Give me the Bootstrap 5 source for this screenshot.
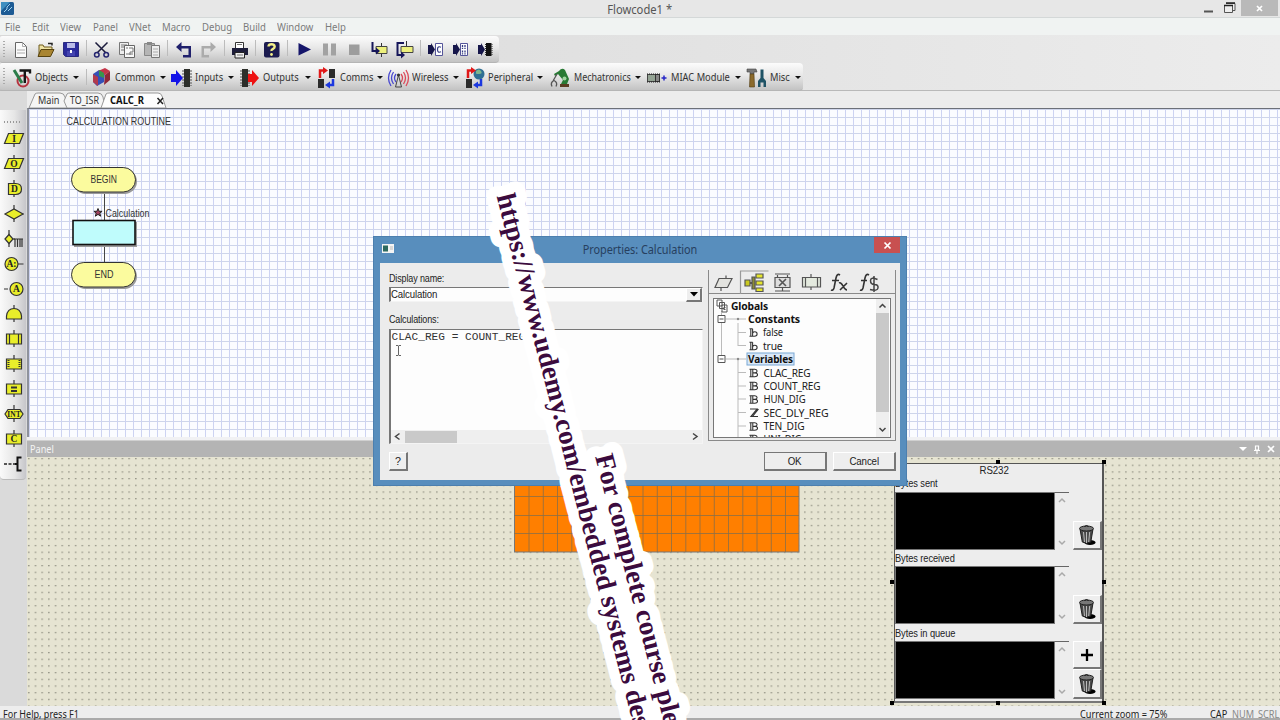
<!DOCTYPE html>
<html lang="en">
<head>
<meta charset="utf-8">
<title>Flowcode1</title>
<link href="https://cdn.jsdelivr.net/npm/bootstrap@5.3.0/dist/css/bootstrap.min.css" rel="stylesheet">
<script src="https://cdn.jsdelivr.net/npm/bootstrap@5.3.0/dist/js/bootstrap.bundle.min.js"></script>
<style>
body{width:1280px;height:720px;overflow:hidden;font:11px/13px "Noto Sans","Open Sans",sans-serif;color:#222;background:#e6e6e6}
svg{display:block;flex:none;overflow:visible}
.nar{display:inline-block;white-space:nowrap;transform:scaleX(.87);transform-origin:0 50%}
.narc{display:inline-block;white-space:nowrap;transform:scaleX(.91)}
.titlebar{height:18px;background:#e7e7e7;border-bottom:1px solid #d4d8d8}
.apptitle{font-size:12.3px;color:#555;padding-top:3px}
.closebox{width:37px;height:16px;background:#b9b9b9;color:#fff}
.menubar{height:17px;background:#f0f3f2;color:#7b7b7b;font-size:11px;padding-left:5px}
.bars{height:56px;background:linear-gradient(90deg,#d9d9d9,#e0e0e0 40%,#ececec);border-bottom:1px solid #b9b9b9;padding-top:1px}
.tool{background:linear-gradient(#fcfcfc,#e8e8e8 45%,#c3c3c3);border-radius:2px 4px 4px 2px;border-bottom:1px solid #b5b5b5}
.tool1{width:499px;height:27px;padding-left:7.5px}
.tool2{width:803px;height:28px;padding-left:10px}
.btnc{width:25px;height:25px}
.vsep{width:6.5px;height:18px}
.vsep::before{content:"";display:block;width:1px;height:16px;background:#bcbcbc;margin-left:3px}
.grp{width:calc(var(--w)*1px);height:26px;padding:2px 4px 0 0;font-size:10.7px;color:#333;white-space:nowrap}
.grp span{display:inline-block;transform:scaleX(.87);transform-origin:0 50%;margin-right:-9px}
.tri{width:0;height:0;border:3px solid transparent;border-top:3px solid #111;border-bottom:0}
.grip{width:2px;height:17px;background:repeating-linear-gradient(#aaa 0 1px,transparent 1px 3px);position:absolute;left:3px;top:5px}
.railwrap{width:27px;background:#dadada}
.rail{width:26px;height:370px;margin-top:19px;background:linear-gradient(90deg,#fafafa,#e6e6e6 55%,#c6c6ca);border-radius:0 0 4px 4px;border-bottom:1px solid #bbb}
.rail .gripx{height:16px;padding:11px 0 0 4px}
.gripx i{display:block;width:16px;height:2px;background:repeating-linear-gradient(90deg,#999 0 1px,transparent 1px 3px)}
.rail svg{margin-left:2px}
.tabs{height:17px;background:#ececec}
.chart{height:329px;border-left:2px solid #8e929c;border-top:1px solid #6c7079;background-color:#fbfcff;background-image:linear-gradient(90deg,#cdd3f2 1px,transparent 1px),linear-gradient(#ced5ea 1px,transparent 1px);background-size:8px 8px}
.split{height:4px;background:#f1f1f3;border-bottom:1px solid #d0d0d0}
.panhead{height:16px;background:#b4b4b4;color:#f5f5f5;font-size:10.5px;padding:0 5px 0 3px}
.canvas2{background-color:#e6e4d2}
.dlg{left:373px;top:236px;width:534px;height:250px;background:#588ebd;border:1px solid #4c7fae;padding:0 6px 6px;font:10.7px/13px "Liberation Sans",sans-serif;letter-spacing:-.15px}
.dlgtitle{height:26px;font:12px/25px "Noto Sans",sans-serif;color:#27405f;letter-spacing:-.05px}
.dlgx{right:0;top:0;width:26px;height:16px;background:#c85050}
.dlgbody{height:217px;background:#ececec}
.dlgbody .nar{transform:scaleX(.84)}
.dlgbody .sunk .nar{transform:scaleX(.9)}
.sunk{background:#fdfdfd;border:1px solid #f4f4f4;border-left:2px solid #777;border-top:1px solid #777}
.pbtn{background:#eee;border:1px solid #fff;border-right:2px solid #777;border-bottom:2px solid #777;color:#222}
.pbtn.dflt{border-left:1px solid #777;border-top:1px solid #777}
.code{font:11.15px/13px "Liberation Mono",monospace;letter-spacing:0;color:#333}
.sb{background:#efefef}
.sb b{display:block;background:#c9c9c9}
.treegrp{border:1px solid #8a8a8a;border-top:0;width:188px;height:171px}
.treetabs{height:24px;border-bottom:1px solid #8a8a8a}
.treebox{margin:4px 4px 0 4px;height:140px;border:1px solid #777;background:#fdfdfd;overflow:hidden}
.rs{left:894px;top:463px;width:210px;height:240px;background:#ededed;border:1px solid #555;border-right-width:2px;border-bottom:2px solid #777;font:10.7px/12px "Liberation Sans",sans-serif;letter-spacing:-.1px}
.term{width:161px;height:58px;background:#000;border:1px solid #777}
.statusbar{height:14px;background:#ededed;font-size:10.2px;line-height:14px;border-bottom:2px solid #aaa;padding:3px 1px 0 3px}
.statusbar .nar{transform:scaleX(.9)}
.overlay{left:0;top:0;width:1280px;height:720px;pointer-events:none}
</style>
</head>
<body class="d-flex flex-column position-relative">

<svg width="0" height="0" class="position-absolute">
<defs>
<symbol id="bin" viewBox="0 0 18 22"><ellipse cx="12" cy="18.5" rx="5.5" ry="2.6" fill="#000"/><path d="M2 5l2.3 13q4 2.5 8.500 0L15 5z" fill="#4a4a4a" stroke="#222"/><path d="M5.500 8l1 10M8.500 8v11M11.700 8l-1 10" stroke="#bbb"/><ellipse cx="8.500" cy="4.500" rx="7" ry="2.500" fill="#777" stroke="#222"/><path d="M6.500 2.500q2-2 4 0" stroke="#111" fill="none"/></symbol>
<symbol id="bB" viewBox="0 0 10 10"><path d="M.5.800H6.500q2.500.2 2.500 2T6.500 4.900Q9.500 5 9.500 7T6.500 9.200H.5M2 .800v8.400M4.200 .800v8.400M4 4.900h3" fill="none" stroke="#333" stroke-width="1.200"/></symbol>
<symbol id="bb" viewBox="0 0 10 10"><path d="M.5.800H4M2 .800v8.400M4 .800v8.400M.5 9.200H6Q9 9 9 6.600T6.500 4.200Q4.800 4.200 4.200 5.500" fill="none" stroke="#333" stroke-width="1.200"/></symbol>
<pattern id="dots" x="0" y="0" width="6.690" height="6.690" patternUnits="userSpaceOnUse"><rect x="1.200" y="1" width="1.200" height="1.200" fill="#77776a"/></pattern>
</defs>
</svg>

<header class="titlebar d-flex justify-content-center position-relative flex-shrink-0">
  <svg class="position-absolute" style="left:1px;top:2px" width="13" height="13"><rect width="13" height="13" rx="1.500" fill="#1d5b94"/><path d="M0 0h9L0 9z" fill="#3f8fc0"/><path d="M3 10L6 7V5l3-3M7 9l4-4" stroke="#9fd4ef" fill="none"/></svg>
  <span class="apptitle narc">Flowcode1 *</span>
  <div class="position-absolute end-0 top-0 d-flex" style="padding-right:2px">
    <svg width="38" height="16"><path d="M1 11.500h9" stroke="#555" stroke-width="2"/><path d="M23 3.500h9v7h-2M21.500 5.500h8v7h-8z" fill="#eee" stroke="#555"/><path d="M21 5.500h9M23 3h9" stroke="#222" stroke-width="1.600"/></svg>
    <span class="closebox d-flex justify-content-center align-items-center"><svg width="7" height="7"><path d="M1 1l5 5M6 1L1 6" stroke="#fff" stroke-width="1.700"/></svg></span>
  </div>
</header>

<nav class="menubar d-flex align-items-center flex-shrink-0">
  <span class="nar" style="width:27px">File</span><span class="nar" style="width:28px">Edit</span><span class="nar" style="width:33px">View</span><span class="nar" style="width:36px">Panel</span><span class="nar" style="width:33px">VNet</span><span class="nar" style="width:40px">Macro</span><span class="nar" style="width:41px">Debug</span><span class="nar" style="width:34px">Build</span><span class="nar" style="width:48px">Window</span><span class="nar">Help</span>
</nav>

<div class="bars flex-shrink-0">
  <div class="tool tool1 d-flex align-items-center position-relative">
    <span class="grip"></span>
    <svg class="btnc"><path d="M7.500 5.500h7l4 4v11h-11z" fill="#fbfbfb" stroke="#666"/><path d="M14.500 5.500v4h4M9 13h8M9 16h8" fill="none" stroke="#999" stroke-width=".8"/></svg>
    <svg class="btnc"><path d="M6 19V8h4l1 2h8v3" fill="#efe3a5" stroke="#6e5a1c"/><path d="M5 19.500l3-7h13l-3.500 7z" fill="#a98531" stroke="#57430f"/><path d="M15 6.500h4v2" stroke="#222" stroke-width="1.500" fill="none"/></svg>
    <svg class="btnc"><path d="M5.500 5.500h15v14h-13l-2-2z" fill="#2b2b9c" stroke="#2b2b80"/><rect x="9" y="6" width="8" height="5" fill="#b9bbe8"/><rect x="9" y="14" width="8" height="5" fill="#4444b0"/><path d="M12 13h2v3h-2z" fill="#fff"/></svg>
    <span class="vsep"></span>
    <svg class="btnc"><path d="M6.500 5.500l10 10M18.500 5.500l-10 10" stroke="#1b1b3c" stroke-width="1.500"/><circle cx="7.800" cy="17.800" r="2.300" fill="none" stroke="#23236f" stroke-width="1.500"/><circle cx="17.200" cy="17.800" r="2.300" fill="none" stroke="#23236f" stroke-width="1.500"/></svg>
    <svg class="btnc"><path d="M5.500 5.500h9v12h-9z" fill="#eee" stroke="#777"/><path d="M7 8h6M7 10h3M7 13h3" stroke="#777"/><path d="M10.500 8.500h10v12h-10z" fill="#fafafa" stroke="#666"/><path d="M12 11h2M15 11h4v4h-3v3M12 17h7" stroke="#777" fill="none"/></svg>
    <svg class="btnc"><path d="M5.500 6.500h10v12h-10z" fill="#b5b5b5" stroke="#888"/><path d="M8 5h5v3H8z" fill="#888"/><path d="M12.500 8.500h8v12h-8z" fill="#eee" stroke="#777"/><path d="M14 12h5M14 15h5M14 18h5" stroke="#aaa"/></svg>
    <span class="vsep"></span>
    <svg class="btnc"><path d="M10.500 5L5 10l5.500 5v-3.500h7V18H12v2.500h8V9h-9.500z" fill="#20206c"/></svg>
    <svg class="btnc"><path d="M14.500 5L20 10l-5.500 5v-3.500H8V18h5v2.500H5.500V9h9z" fill="#ababab"/></svg>
    <span class="vsep"></span>
    <svg class="btnc"><path d="M8.500 11V5.500h8V11" fill="#fff" stroke="#333"/><path d="M5 11h16v7H5z" fill="#1d1d3a"/><path d="M8 15.500h9.500V21H8z" fill="#eee" stroke="#222"/><path d="M10 7.500h5M10 18h6" stroke="#777"/></svg>
    <span class="vsep"></span>
    <svg class="btnc"><rect x="5" y="5" width="15.500" height="15.500" rx="2" fill="#1c1c50"/><path d="M9.500 9.500q.2-2.200 3-2.200t3.200 2.300q0 1.500-1.700 2.300t-1.500 2.100" fill="none" stroke="#f3f08a" stroke-width="2.400"/><circle cx="12.500" cy="17.500" r="1.400" fill="#f3f08a"/></svg>
    <span class="vsep" style="width:8px"></span>
    <svg class="btnc"><path d="M6.500 6L19 12.500 6.500 18.500z" fill="#15156a"/></svg>
    <svg class="btnc"><path d="M6 6.500h5v12H6zM14 6.500h5v12h-5z" fill="#a2a2a2"/></svg>
    <svg class="btnc"><path d="M7 7.500h10.500V18H7z" fill="#9d9d9d"/></svg>
    <svg class="btnc"><path d="M9 9.500h11v7H9z" fill="#edf07c" stroke="#444"/><path d="M14.500 6v3M14.500 17v3" stroke="#333"/><path d="M5.500 5v9h5" stroke="#16165a" stroke-width="2" fill="none"/><path d="M9 10.500l4 3.500-4 3.500z" fill="#16165a"/></svg>
    <svg class="btnc"><path d="M9 9.500h12v6H9z" fill="#edf07c" stroke="#444"/><path d="M14.500 4v5" stroke="#333"/><path d="M12 6H5.500v12h5" stroke="#16165a" stroke-width="2" fill="none"/><path d="M9 14.500l4 3.500-4 3.500z" fill="#16165a"/></svg>
    <span class="vsep"></span>
    <svg class="btnc"><path d="M5 8h3V6l4 6.500L8 19v-2H5z" fill="#16164a"/><path d="M12.500 6.500h7v12h-7z" fill="#fff" stroke="#55559a"/><path d="M18 10.200q-3.500-1.500-3.500 2.300T18 14.800" fill="none" stroke="#333a80" stroke-width="1.200"/></svg>
    <svg class="btnc"><path d="M5 8h3V6l4 6.500L8 19v-2H5z" fill="#16164a"/><path d="M12.500 6.500h7v12h-7z" fill="#fff" stroke="#55559a"/><path d="M14.500 8v4M17 8v4M14.500 13.500v4M17 13.500v4" stroke="#333a80" stroke-width="1.300" stroke-dasharray="2 .7"/></svg>
    <svg class="btnc"><path d="M5 8h3V6l4 6.500L8 19v-2H5z" fill="#16164a"/><rect x="13" y="6" width="5.500" height="13" fill="#111"/><path d="M12.500 7v11M19 7v11" stroke="#333" stroke-dasharray="1 1"/></svg>
  </div>

  <div class="tool tool2 d-flex align-items-center position-relative">
    <div class="grip"></div>
    <div class="grp d-flex align-items-center" style="--w:80;padding-right:1px"><svg width="25" height="24"><circle cx="13" cy="15" r="5.500" fill="none" stroke="#b63440" stroke-width="2"/><path d="M4 4l8 13" stroke="#2c7d4a" stroke-width="3"/><path d="M9.500 4.500H20v3M14.800 5v12" stroke="#161616" stroke-width="2.400" fill="none"/></svg><span>Objects</span><i class="tri ms-auto me-1"></i><i class="vsep"></i></div>
    <div class="grp d-flex align-items-center" style="--w:80"><svg width="25" height="24"><path d="M3 8l6-4 6 3-1 9-7 4-4-4z" fill="#3450b8"/><path d="M8 5l7-3 5 3-5 4z" fill="#c43549"/><path d="M15 9l5-4v9l-6 5z" fill="#8f2638"/><path d="M3 8l5 3v9l-5-4z" fill="#b13a4d"/><path d="M9 4l5 3v5l-5-2z" fill="#39954d"/></svg><span>Common</span><i class="tri ms-auto"></i></div>
    <div class="grp d-flex align-items-center" style="--w:68"><svg width="25" height="24"><path d="M1 8h5V4l7 8-7 8v-4H1z" fill="#1212e8"/><path d="M14 3h6v18h-6z" fill="#2c2e2a"/><path d="M13 4v16M21 4v16" stroke="#555" stroke-dasharray="2 1"/></svg><span>Inputs</span><i class="tri ms-auto"></i></div>
    <div class="grp d-flex align-items-center" style="--w:77"><svg width="25" height="24"><path d="M4 3h6v18H4z" fill="#2c2e2a"/><path d="M3 4v16M11 4v16" stroke="#555" stroke-dasharray="2 1"/><path d="M10 8h4V4l7 8-7 8v-4h-4z" fill="#ee1212"/></svg><span>Outputs</span><i class="tri ms-auto"></i></div>
    <div class="grp d-flex align-items-center" style="--w:72"><svg width="25" height="24"><path d="M3 13h6v9H3zM14 3h6v9h-6z" fill="#2b2b2b"/><path d="M5 12V4.500h4" stroke="#e01818" stroke-width="2.500" fill="none"/><path d="M8 1l5 3.500L8 8z" fill="#e01818"/><path d="M18 13v6h-4" stroke="#1c38e0" stroke-width="2.500" fill="none"/><path d="M15 15.500L10 19l5 3.500z" fill="#1c38e0"/></svg><span>Comms</span><i class="tri ms-auto"></i></div>
    <div class="grp d-flex align-items-center" style="--w:76"><svg width="25" height="24"><g fill="none" stroke-width="1.300"><path d="M9 8q-3 4 0 8M6.500 6q-4 6 0 12M4 4q-5 8 0 16" stroke="#4747cf"/><path d="M14 8q3 4 0 8M16.500 6q4 6 0 12M19 4q5 8 0 16" stroke="#dc4958"/></g><path d="M11.500 9L8.500 21h6z" fill="none" stroke="#444"/><circle cx="11.500" cy="9" r="1.600" fill="#333"/></svg><span>Wireless</span><i class="tri ms-auto"></i></div>
    <div class="grp d-flex align-items-center" style="--w:86"><svg width="25" height="24"><path d="M3 13h6v9H3z" fill="#2b2b2b"/><circle cx="16" cy="8" r="5.500" fill="#2f6f93"/><path d="M13 5q3-3 5 0t-2 3-3-1z" fill="#7db58d"/><path d="M5 12V4.500h4" stroke="#e01818" stroke-width="2.500" fill="none"/><path d="M8 1l5 3.500L8 8z" fill="#e01818"/><path d="M18 13v6h-4" stroke="#1c38e0" stroke-width="2.500" fill="none"/><path d="M15 15.500L10 19l5 3.500z" fill="#1c38e0"/></svg><span>Peripheral</span><i class="tri ms-auto" style="margin-right:2px"></i></div>
    <div class="grp d-flex align-items-center" style="--w:96"><svg width="25" height="24"><path d="M10 5q3-4 6-1l4 9-2 5h-6l2-4-5-6-3 2-1-2z" fill="#287a34"/><circle cx="15.500" cy="12.500" r="2" fill="#9fd49f"/><path d="M11 18h9v3h-9z" fill="#5a3d22"/><path d="M8 8L4 15M5 14.500q-4 2-2 6M5 14.500q4 2 2 6" fill="none" stroke="#555" stroke-width="1.300"/></svg><span style="transform:scaleX(.84);margin-right:-12px">Mechatronics</span><i class="tri ms-auto"></i></div>
    <div class="grp d-flex align-items-center" style="--w:100"><svg width="26" height="24"><rect x="2.500" y="8.500" width="8" height="7" fill="#93a393" stroke="#444"/><rect x="10.500" y="8.500" width="4" height="7" fill="#888" stroke="#333"/><path d="M2 8h13M2 16h13" stroke="#222" stroke-dasharray="1 1"/><path d="M19 9.500v5M16.500 12h5" stroke="#2727c8" stroke-width="1.500"/></svg><span>MIAC Module</span><i class="tri ms-auto"></i></div>
    <div class="grp d-flex align-items-center" style="--w:58;padding-right:2px"><svg width="25" height="24"><path d="M2 3h9l1 3H9v2H5V6H2z" fill="#777" stroke="#444" stroke-width=".6"/><path d="M5 8h4l.5 13h-5z" fill="#8b6a2c" stroke="#4f3a12" stroke-width=".6"/><path d="M13 21v-6l2.500-3V3.500h3V12l2.500 3v6h-2.500v-4.500h-3V21z" fill="#1f5366"/></svg><span>Misc</span><i class="tri ms-auto"></i></div>
  </div>
</div>

<main class="d-flex flex-grow-1" style="min-height:0">
  <aside class="railwrap flex-shrink-0">
    <div class="rail">
      <div class="gripx"><i></i></div>
      <svg width="24" height="350" fill="#e9ee2a" stroke="#333" stroke-width="1.200" font-family="Liberation Serif,serif" font-weight="bold">
        <path d="M12 4v17M12 29v17M12 54v17M12 79v17M7 104v17M12 179v17M12 204v17M12 229v17M12 254v17M12 279v17M12 304v17M12 88h9.500M7 113h6M16 138h5.500M2 163h4" fill="none"/>
        <path d="M6.500 7.500h15l-4 10h-15zM6.500 32.500h15l-4 10h-15zM6.500 57.500h7q6 0 6 5.500t-6 5.500h-7zM3 88l9-5 9 5-9 5zM3 113l4-4.500 4 4.500-4 4.500z"/>
        <circle cx="9.500" cy="138" r="6.500"/><circle cx="14.500" cy="163" r="6.500"/>
        <path d="M4.500 193v-3q1-7.500 7.500-7.500t7.500 7.500v3zM4.500 208h15v10h-15zM4.500 233h15v10h-15zM4.500 258h15v10h-15zM6 283.500h12l3 4.500-3 4.500H6L3 288zM4.500 308h15v10h-15z"/>
        <path d="M7.500 208v10M16.500 208v10M13 113v8M15.500 113v8M18 113v8M20 113v8M12 113h9" fill="none"/><path d="M9 261.500h6M9 265h6" stroke-width="1.800"/>
        <path d="M6.500 234v8M17.500 234v8" stroke-dasharray="1 1" stroke-width="2"/>
        <path d="M2 338h11" stroke="#222" stroke-dasharray="3 1.500" stroke-width="1.500"/><path d="M19.500 331.500h-4v13h4M13 338h2" fill="none" stroke="#111" stroke-width="2"/>
        <g fill="#222" stroke="none" text-anchor="middle" font-size="9.500"><text x="12" y="15.700">I</text><text x="12" y="40.700">O</text><text x="12.500" y="66">D</text><text x="9.500" y="141">A:</text><text x="14.500" y="166">A</text><text x="12" y="290.800" font-size="7.500">INT</text><text x="12" y="316.200">C</text></g>
      </svg>
    </div>
  </aside>

  <section class="flex-grow-1 d-flex flex-column" style="min-width:0">
    <div class="tabs flex-shrink-0">
      <svg width="150" height="17" font-family="Noto Sans,sans-serif" font-size="10.500" fill="#333">
        <path d="M2 17L8 3q1-1 3-1h22q4 0 5 4l3 11z" fill="#f5f5f5" stroke="#999"/><path d="M37 10l3-7q1-1 3-1h28q4 0 5 4l2 11H40z" fill="#f5f5f5" stroke="#999"/><path d="M74 17l5-14q1-1 3-1h49q3 0 4 3l4 12z" fill="#fdfdfd" stroke="#999"/>
        <text x="11" y="13" textLength="21.500" lengthAdjust="spacingAndGlyphs">Main</text><text x="43" y="13" textLength="29" lengthAdjust="spacingAndGlyphs">TO_ISR</text><text x="83" y="13" font-weight="bold" textLength="34" lengthAdjust="spacingAndGlyphs" fill="#111">CALC_R</text><path d="M130.500 7l5.500 6M136 7l-5.500 6" stroke="#222" stroke-width="1.500"/>
      </svg>
    </div>
    <div class="chart flex-shrink-0">
      <svg width="200" height="200" font-family="Liberation Sans,sans-serif" font-size="10.800" fill="#333">
        <text x="37.500" y="16" textLength="104.500" lengthAdjust="spacingAndGlyphs">CALCULATION ROUTINE</text>
        <path d="M75.500 83v71" stroke="#444"/>
        <g fill="#9a9a9a"><rect x="44" y="60" width="64" height="25" rx="12.500"/><rect x="44" y="155" width="64" height="25" rx="12.500"/><rect x="45" y="113" width="63" height="25"/></g>
        <rect x="42.500" y="58.500" width="64" height="24.500" rx="12.300" fill="#fbfb9e" stroke="#333"/><rect x="42.500" y="153.500" width="64" height="24.500" rx="12.300" fill="#fbfb9e" stroke="#333"/><rect x="44" y="111.500" width="62" height="24" fill="#bffcfc" stroke="#111" stroke-width="1.600"/>
        <text x="61.500" y="74" textLength="26.500" lengthAdjust="spacingAndGlyphs">BEGIN</text><text x="65.500" y="169" textLength="19" lengthAdjust="spacingAndGlyphs">END</text><text x="76.500" y="108" textLength="44" lengthAdjust="spacingAndGlyphs">Calculation</text>
        <path d="M69 99.500l1.100 2.800h3l-2.300 1.900.9 3-2.700-1.800-2.700 1.800.9-3-2.300-1.900h3z" fill="#a0425e" stroke="#222"/>
      </svg>
    </div>
    <div class="split flex-shrink-0"></div>
    <div class="panhead d-flex align-items-center flex-shrink-0"><span class="nar">Panel</span>
      <svg class="ms-auto" width="36" height="12"><path d="M0 4h8L4 8z" fill="#fff"/><path d="M16.500 3h3v4h-3zM15 7.500h6M18 8v3" fill="none" stroke="#fff" stroke-width="1.200"/><path d="M29 3l6 6M35 3l-6 6" stroke="#fff" stroke-width="1.700"/></svg></div>
    <div class="canvas2 flex-grow-1 overflow-hidden"><svg width="1253" height="249"><rect width="1253" height="249" fill="url(#dots)"/></svg></div>
  </section>
</main>

<footer class="statusbar d-flex align-items-center flex-shrink-0">
  <span class="nar" style="transform:scaleX(.89)">For Help, press F1</span><span class="nar ms-auto" style="width:130px">Current zoom = 75%</span><span class="nar" style="width:22px">CAP</span><span class="nar" style="width:26px;color:#888">NUM</span><span class="nar" style="color:#888;width:21px">SCRL</span>
</footer>

<!-- LCD component on the panel -->
<svg class="position-absolute" style="left:514px;top:480px" width="286" height="73"><rect x=".5" y=".5" width="284.500" height="71.500" fill="#ff7f00" stroke="#777"/>
<path d="M15 0v72M29.300 0v72M43.500 0v72M57.800 0v72M72 0v72M86.300 0v72M100.500 0v72M114.800 0v72M129 0v72M143.300 0v72M157.500 0v72M171.800 0v72M186 0v72M200.300 0v72M214.500 0v72M228.800 0v72M243 0v72M257.300 0v72M271.500 0v72M0 16.500h285M0 35.500h285M0 53.500h285" stroke="#8a6f48" stroke-width=".8"/></svg>

<!-- RS232 terminal component -->
<div class="rs position-absolute">
  <div class="text-center" style="padding-right:8px"><span class="narc">RS232</span></div>
  <svg class="position-absolute" style="left:-1px;top:-1px" width="210" height="240"><path d="M102 -3h4v4h-4zM208 -3h4v4h-4zM-4 117h4v4h-4zM208 117h4v4h-4zM-4 238h4v4h-4zM102 238h4v4h-4zM208 238h4v4h-4z" fill="#000"/></svg>
  <div class="d-flex flex-column">
    <div style="height:16px;padding-top:1px"><span class="nar">Bytes sent</span></div>
    <div class="d-flex" style="height:59px"><div class="term"></div><svg width="14" height="58"><path d="M0 .5h14" stroke="#666"/><path d="M4 10l3-3 3 3M4 49l3 3 3-3" fill="none" stroke="#aaa" stroke-width="1.500"/></svg>
      <div class="pbtn mt-auto ms-1 d-flex align-items-center justify-content-center" style="width:29px;height:29px;margin-bottom:1px"><svg width="18" height="22"><use href="#bin"/></svg></div></div>
    <div style="height:15px;padding-top:1px"><span class="nar">Bytes received</span></div>
    <div class="d-flex" style="height:59px"><div class="term"></div><svg width="14" height="58"><path d="M0 .5h14" stroke="#666"/><path d="M4 10l3-3 3 3M4 49l3 3 3-3" fill="none" stroke="#aaa" stroke-width="1.500"/></svg>
      <div class="pbtn mt-auto ms-1 d-flex align-items-center justify-content-center" style="width:29px;height:29px;margin-bottom:1px"><svg width="18" height="22"><use href="#bin"/></svg></div></div>
    <div style="height:16px;padding-top:2px"><span class="nar">Bytes in queue</span></div>
    <div class="d-flex" style="height:59px"><div class="term"></div><svg width="14" height="58"><path d="M0 .5h14" stroke="#666"/><path d="M4 10l3-3 3 3M4 49l3 3 3-3" fill="none" stroke="#aaa" stroke-width="1.500"/></svg>
      <div class="ms-1 d-flex flex-column"><div class="pbtn d-flex align-items-center justify-content-center" style="width:29px;height:28px"><svg width="14" height="14"><path d="M7 1v12M1 7h12" stroke="#000" stroke-width="2.300"/></svg></div>
      <div class="pbtn d-flex align-items-center justify-content-center" style="width:29px;height:30px"><svg width="18" height="22"><use href="#bin"/></svg></div></div></div>
  </div>
</div>

<!-- Properties dialog -->
<div class="dlg position-absolute">
  <div class="dlgtitle text-center position-relative">
    <svg class="position-absolute" style="left:2px;top:7px" width="12" height="9"><rect width="12" height="9" fill="#f4f4f4"/><rect x="1" y="1.500" width="5" height="6" fill="#2d6a5f"/><path d="M8 3h3M8 5h3" stroke="#bbb"/></svg>
    <span class="narc">Properties: Calculation</span>
    <span class="dlgx position-absolute d-flex align-items-center justify-content-center"><svg width="7" height="7"><path d="M.5.500l6 6M6.500.500l-6 6" stroke="#fff" stroke-width="1.700"/></svg></span>
  </div>
  <div class="dlgbody d-flex">
    <div class="d-flex flex-column" style="width:314px;margin-left:9px">
      <div style="margin-top:9px;height:13px"><span class="nar">Display name:</span></div>
      <div class="sunk d-flex align-items-center" style="height:15px;margin-top:2px"><span class="nar">Calculation</span><span class="pbtn ms-auto d-flex align-items-center justify-content-center" style="width:16px;height:14px"><svg width="8" height="5"><path d="M0 0h8L4 4.500z" fill="#000"/></svg></span></div>
      <div style="margin-top:11px;height:13px"><span class="nar">Calculations:</span></div>
      <div class="sunk d-flex flex-column position-relative" style="height:115px;margin-top:3px">
        <div class="code" style="padding-left:.5px;padding-top:1px">CLAC_REG = COUNT_REG</div>
        <svg class="position-absolute" style="left:4px;top:15px" width="7" height="11"><path d="M1 .5h2l.5.500.5-.5h2M3.500 1v9M1 10.500h2l.5-.5.500.500h2" stroke="#666" fill="none"/></svg>
        <div class="sb d-flex mt-auto align-items-center" style="height:13px"><svg width="14" height="9"><path d="M8.500 1.500l-4 3 4 3" fill="none" stroke="#444" stroke-width="1.500"/></svg><b style="width:52px;height:12px"></b><svg class="ms-auto" width="12" height="9"><path d="M3 1.500l4 3-4 3" fill="none" stroke="#444" stroke-width="1.500"/></svg></div>
      </div>
      <div class="pbtn text-center" style="width:19px;height:19px;margin-top:8px;line-height:16px">?</div>
    </div>
    <div class="d-flex flex-column" style="margin-left:5px;width:188px">
      <div class="treegrp" style="margin-top:7px">
        <div class="treetabs">
          <svg width="186" height="24" fill="none" stroke="#555" stroke-width="1.200">
            <path d="M31.500 24V1h28" stroke="#999"/><path d="M10 8.500h13l-4.500 9H6zM17 5.500v3M12 18v3" fill="#e3e3df"/>
            <path d="M36 10h5v6h-5z" fill="#c9c81f"/><path d="M41 13h3" stroke-width="2"/><path d="M43 7h3v12h-3z" fill="#8d8d32"/><path d="M47 4h7v4h-7zM47 11h7v4h-7zM47 18h7v3.500h-7z" fill="#e5e52e"/>
            <path d="M66 4h15M66 21h15M68.500 5v3M78.500 5v3" /><path d="M66 7.500h15v10H66z" fill="#ddd"/><path d="M70 9l7 7M77 9l-7 7" stroke-width="1.600"/><path d="M73.500 17v4"/>
            <path d="M102 4v16" /><path d="M93.500 7.500h18v9.500h-18z" fill="#e4eadf"/><path d="M96.500 7.500V17M108.500 7.500V17"/>
            <path d="M131 5q-3-2-4 3l-2 10q-1 3-3 2M123 10.500h7M130 13q2-1 4 3t4 4M138 13l-7 7" stroke="#333" stroke-width="1.600"/>
            <path d="M160 5q-3-2-4 3l-2 10q-1 3-3 2M152 10.500h6" stroke="#333" stroke-width="1.600"/><path d="M168.500 9.500q-7-3-7 1t4 4 3.500 3.500-8 1.500M165 6v16" stroke="#444" stroke-width="1.500"/>
          </svg>
        </div>
        <div class="treebox d-flex">
          <svg width="162" height="138" font-family="Noto Sans,sans-serif" font-size="10.700" fill="#222">
            <path d="M7.500 12v49M24 61v77M24 24v23M24 33.500h8M24 46.500h8M24 73.500h8M24 87h8M24 100h8M24 113.500h8M24 127h8M12 20h20M12 60h20" stroke="#bbb" fill="none"/>
            <g fill="#fff" stroke="#555"><path d="M3 1h5v6H3zM5.500 3.500h5v6h-5zM8 6h5v7H8zM4 16.500h7v7H4zM4 56.500h7v7H4z"/><path d="M5.500 20h4M5.500 60h4M9.500 8.500h2M9.500 10.500h2"/></g><circle cx="24" cy="20" r="1.200" fill="#888"/><circle cx="24" cy="60" r="1.200" fill="#888"/>
            <rect x="33" y="54" width="47" height="12" fill="#d9e8f8" stroke="#79a7d4"/>
            <g font-weight="bold" fill="#111"><text x="17" y="10.500" textLength="37" lengthAdjust="spacingAndGlyphs">Globals</text><text x="34" y="24" textLength="52" lengthAdjust="spacingAndGlyphs">Constants</text><text x="34" y="64" textLength="45" lengthAdjust="spacingAndGlyphs">Variables</text></g>
            <text x="49" y="37" textLength="20" lengthAdjust="spacingAndGlyphs">false</text><text x="49" y="50.500" textLength="19.500" lengthAdjust="spacingAndGlyphs">true</text><text x="49.500" y="77.500" textLength="47" lengthAdjust="spacingAndGlyphs">CLAC_REG</text><text x="49.500" y="91" textLength="57" lengthAdjust="spacingAndGlyphs">COUNT_REG</text><text x="49.500" y="104" textLength="42" lengthAdjust="spacingAndGlyphs">HUN_DIG</text><text x="49.500" y="117.500" textLength="65" lengthAdjust="spacingAndGlyphs">SEC_DLY_REG</text><text x="49.500" y="131" textLength="41" lengthAdjust="spacingAndGlyphs">TEN_DIG</text><text x="49.500" y="144" textLength="38" lengthAdjust="spacingAndGlyphs">UNI_DIG</text>
            <use href="#bb" x="35" y="28.500" width="9" height="10"/><use href="#bb" x="35" y="42" width="9" height="10"/>
            <use href="#bB" x="35" y="69" width="9" height="10"/><use href="#bB" x="35" y="82" width="9" height="10"/><use href="#bB" x="35" y="95.500" width="9" height="10"/><use href="#bB" x="35" y="122.500" width="9" height="10"/><use href="#bB" x="35" y="135" width="9" height="10"/>
            <path d="M36 110h7l-6 7.500h7M38.500 117.500l6-7.500" fill="none" stroke="#333" stroke-width="1.200"/>
          </svg>
          <div class="sb d-flex flex-column" style="width:13px"><svg width="13" height="14"><path d="M3.500 8.500l3-3 3 3" fill="none" stroke="#444" stroke-width="1.500"/></svg><b style="height:99px"></b><svg class="mt-auto" width="13" height="14"><path d="M3.500 5l3 3 3-3" fill="none" stroke="#444" stroke-width="1.500"/></svg></div>
        </div>
      </div>
      <div class="d-flex" style="margin:11px 0 0 56px"><div class="pbtn dflt text-center" style="width:63px;height:19px;line-height:16px"><span class="narc">OK</span></div><div class="pbtn text-center" style="width:63px;height:19px;line-height:16px;margin-left:6px"><span class="narc">Cancel</span></div></div>
    </div>
  </div>
</div>

<!-- Slanted course notice over the window -->
<svg class="overlay position-absolute" font-family="Liberation Serif,serif" font-weight="bold" font-size="27.350">
  <g fill="#fff" stroke="#fff" stroke-width="21" stroke-linejoin="round"><text transform="translate(496.500,196) rotate(75.500)">https://www.udemy.com/embedded systems des</text><text transform="translate(595,456.500) rotate(75.500)">For complete course ple</text></g>
  <g fill="#3b0b3e"><text transform="translate(496.500,196) rotate(75.500)">https://www.udemy.com/embedded systems des</text><text transform="translate(595,456.500) rotate(75.500)">For complete course ple</text></g>
</svg>
</body>
</html>
